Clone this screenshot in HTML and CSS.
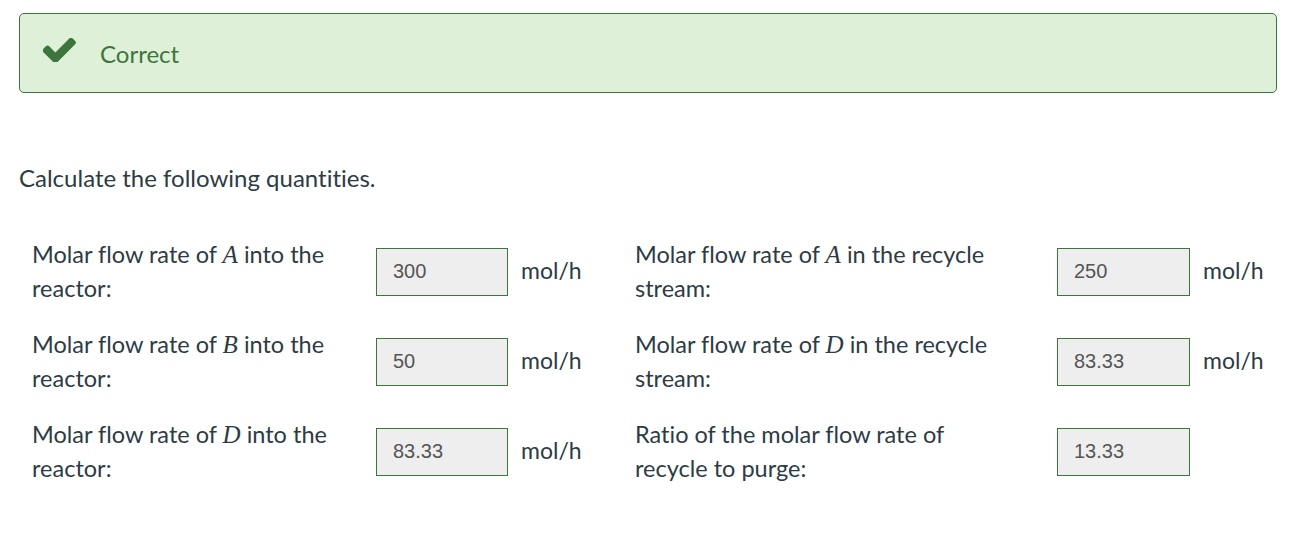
FILE: index.html
```html
<!DOCTYPE html>
<html lang="en">
<head>
    <meta charset="UTF-8">
    <meta name="viewport" content="width=device-width, initial-scale=1.0">
    <title>Calculate the following quantities</title>
    <link rel="stylesheet" href="styles.css">
</head>
<body>
    <div class="alert-correct">
        <svg class="check-icon" viewBox="143 362 1528 1092" aria-hidden="true">
            <path d="M1671 566q0 40-28 68l-724 724-136 136q-28 28-68 28t-68-28l-136-136-362-362q-28-28-28-68t28-68l136-136q28-28 68-28t68 28l294 295 656-657q28-28 68-28t68 28l136 136q28 28 28 68z"/>
        </svg>
        <span class="alert-text">Correct</span>
    </div>

    <p class="question">Calculate the following quantities.</p>

    <div class="answers">
        <div class="label">Molar flow rate of <span class="math">A</span> into the reactor:</div>
        <input class="answer" type="text" value="300" readonly>
        <div class="unit">mol/h</div>
        <div class="label label-wide">Molar flow rate of <span class="math">A</span> in the recycle stream:</div>
        <input class="answer" type="text" value="250" readonly>
        <div class="unit">mol/h</div>

        <div class="label">Molar flow rate of <span class="math">B</span> into the reactor:</div>
        <input class="answer" type="text" value="50" readonly>
        <div class="unit">mol/h</div>
        <div class="label label-wide">Molar flow rate of <span class="math">D</span> in the recycle stream:</div>
        <input class="answer" type="text" value="83.33" readonly>
        <div class="unit">mol/h</div>

        <div class="label">Molar flow rate of <span class="math">D</span> into the reactor:</div>
        <input class="answer" type="text" value="83.33" readonly>
        <div class="unit">mol/h</div>
        <div class="label label-wide">Ratio of the molar flow rate of recycle to purge:</div>
        <input class="answer" type="text" value="13.33" readonly>
        <div class="unit"></div>
    </div>
</body>
</html>
```

FILE: styles.css
```css
* {
    margin: 0;
    padding: 0;
    box-sizing: border-box;
}

body {
    padding: 13px 16px 0 19px;
    font-family: Lato, "Open Sans", sans-serif;
    font-variant-ligatures: none;
    color: #2d3b45;
    background: #fff;
}

.alert-correct {
    height: 80px;
    display: flex;
    align-items: center;
    padding-left: 23px;
    background: #dff0d8;
    border: 1px solid #3c763d;
    border-radius: 5px;
    color: #3c763d;
}

.check-icon {
    width: 33px;
    height: 24px;
    fill: #3c763d;
    margin-top: -6px;
}

.alert-text {
    margin-left: 24px;
    font-size: 24px;
}

.question {
    margin-top: 68px;
    font-size: 24px;
    line-height: 34px;
}

.answers {
    margin-top: 42px;
    display: grid;
    grid-template-columns: 357px 132px 127px 422px 133px auto;
    grid-auto-rows: 68px;
    row-gap: 22px;
    align-items: center;
}

.label {
    padding-left: 13px;
    padding-right: 10px;
    font-size: 23.5px;
    line-height: 34px;
}

.label-wide {
    padding-left: 0;
    padding-right: 45px;
}

.math {
    font-family: "Liberation Serif", "DejaVu Serif", serif;
    font-style: italic;
    font-size: 25px;
    line-height: 1;
}

.answer {
    width: 100%;
    height: 48px;
    padding-left: 16px;
    margin-top: 1px;
    background: #eee;
    border: 1px solid #3c763d;
    font-family: "Liberation Sans", Arial, sans-serif;
    font-size: 20px;
    color: #555;
    outline: none;
}

.unit {
    padding-left: 13px;
    margin-top: -3px;
    font-size: 23px;
}
```
